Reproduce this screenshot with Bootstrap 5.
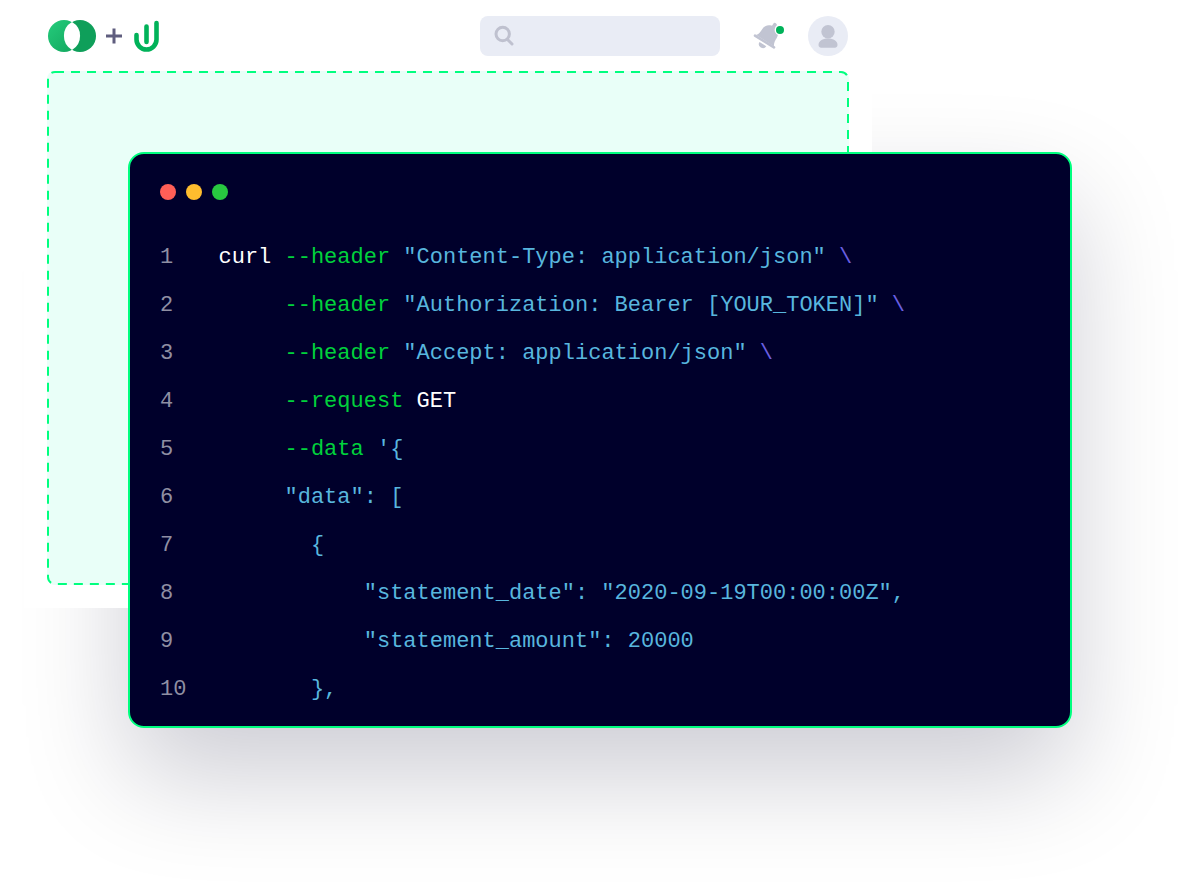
<!DOCTYPE html>
<html lang="en">
<head>
<meta charset="utf-8">
<title>API request</title>
<link href="https://cdn.jsdelivr.net/npm/bootstrap@5.3.0/dist/css/bootstrap.min.css" rel="stylesheet">
<style>
body { background: #fff; }
.stage { height: 888px; overflow: hidden; }
.glow { position: absolute; left: 128px; top: 152px; width: 944px; height: 576px; border-radius: 16px; box-shadow: 0 48px 110px rgba(0, 0, 40, .2); }
.sheet { position: relative; z-index: 1; margin-left: 24px; width: 848px; height: 608px; padding: 16px 23px 0 23px; background: #fff; }
.topbar { height: 40px; margin-bottom: 15px; }
.findbox { width: 240px; height: 40px; background: #e9ecf5; border-radius: 8px; padding-left: 12px; margin-left: 320px; }
.bellbox { margin-left: 30px; width: 32px; height: 32px; }
.bellbox svg { overflow: visible; }
.face { margin-left: 26px; width: 40px; height: 40px; background: #e9ecf5; }
.dropzone { height: 514px; background: #e9fff8; border-radius: 8px; }
.dropline { fill: none; stroke: #00ff7f; stroke-width: 2; stroke-dasharray: 9 7; }
.terminal { position: absolute; z-index: 2; left: 128px; top: 152px; width: 944px; height: 576px; background: #00002b; border: 2px solid #00ff7f; border-radius: 16px; padding: 30px; font-family: "Liberation Mono", monospace; font-size: 22px; line-height: 48px; }
.lights { height: 16px; gap: 10px; margin-bottom: 34px; }
.light { width: 16px; height: 16px; }
.red { background: #ff5f57; }
.amber { background: #ffbd2e; }
.lime { background: #28c840; }
.lineno { width: 58.5px; flex: none; color: #8f8fa3; }
.codeline { white-space: pre; color: #fff; }
.flag { color: #00d13c; }
.str { color: #58b6de; }
.esc { color: #6a5fe0; }
</style>
</head>
<body class="m-0">
<div class="stage position-relative">
  <div class="glow"></div>
  <div class="sheet">
    <div class="topbar d-flex align-items-center">
      <svg width="113" height="40" viewBox="0 0 113 40" fill="none" class="flex-shrink-0" aria-label="logo">
        <defs>
          <linearGradient id="lg1" x1="0" y1="0" x2="1" y2="1"><stop offset="0" stop-color="#25cc7c"/><stop offset="1" stop-color="#10a45c"/></linearGradient>
        </defs>
        <circle cx="33" cy="20" r="16" fill="#0f9f5a"/>
        <circle cx="17" cy="20" r="16" fill="url(#lg1)"/>
        <path d="M25 6.1 A16 16 0 0 1 25 33.9 A16 16 0 0 1 25 6.1Z" fill="#fff"/>
        <path d="M59 20H75M67 12.5V27.5" stroke="#5f5d7e" stroke-width="3"/>
        <path d="M89.5 19v4.5a10 10 0 0 0 20 0V7M99.5 10.5V26" stroke="#00b259" stroke-width="4.6" stroke-linecap="round"/>
      </svg>
      <div class="findbox d-flex align-items-center">
        <svg width="24" height="24" viewBox="0 0 24 24" fill="none" aria-label="search">
          <circle cx="10.7" cy="10" r="6.7" stroke="#bfc1cf" stroke-width="3"/>
          <path d="M15.5 15.5L20 20" stroke="#bfc1cf" stroke-width="3" stroke-linecap="round"/>
        </svg>
      </div>
      <div class="bellbox">
        <svg width="32" height="32" viewBox="0 0 32 32" class="d-block" aria-label="notifications">
          <g transform="translate(14.5 21.5) rotate(32)" fill="#c1c4d2">
            <path d="M-10.5 -1C-8.5 -4 -8.5 -6.5 -8.5 -9.5C-8.5 -14.5 -4.5 -17.5 0 -17.5C4.5 -17.5 8.5 -14.5 8.5 -9.5C8.5 -6.5 8.5 -4 10.5 -1Z"/>
            <rect x="-2" y="-21.5" width="4" height="7" rx="2"/>
            <rect x="-12.5" y="-1.3" width="25" height="2.6" rx="1.3"/>
            <path d="M-4 3H4A4 4 0 0 1 -4 3Z"/>
          </g>
          <circle cx="30" cy="10" r="5.4" fill="#fff"/>
          <circle cx="30" cy="10" r="4" fill="#00b259"/>
        </svg>
      </div>
      <div class="face rounded-circle flex-shrink-0">
        <svg width="40" height="40" viewBox="0 0 40 40" class="d-block" fill="#c1c4d2" aria-label="user">
          <circle cx="20" cy="15.7" r="6.7"/>
          <path d="M10.5 29C10.5 25 14.5 22.5 20 22.5S29.5 25 29.5 29C29.5 31 28 31.7 27 31.7H13C12 31.7 10.5 31 10.5 29Z"/>
        </svg>
      </div>
    </div>
    <div class="dropzone">
      <svg width="802" height="514" viewBox="0 0 802 514" class="d-block"><rect class="dropline" x="1" y="1" width="800" height="512" rx="7"/></svg>
    </div>
  </div>
  <div class="terminal">
    <div class="lights d-flex">
      <span class="light red rounded-circle"></span>
      <span class="light amber rounded-circle"></span>
      <span class="light lime rounded-circle"></span>
    </div>
    <div class="d-flex"><span class="lineno">1</span><span class="codeline">curl <span class="flag">--header</span> <span class="str">"Content-Type: application/json"</span> <span class="esc">\</span></span></div>
    <div class="d-flex"><span class="lineno">2</span><span class="codeline">     <span class="flag">--header</span> <span class="str">"Authorization: Bearer [YOUR_TOKEN]"</span> <span class="esc">\</span></span></div>
    <div class="d-flex"><span class="lineno">3</span><span class="codeline">     <span class="flag">--header</span> <span class="str">"Accept: application/json"</span> <span class="esc">\</span></span></div>
    <div class="d-flex"><span class="lineno">4</span><span class="codeline">     <span class="flag">--request</span> GET</span></div>
    <div class="d-flex"><span class="lineno">5</span><span class="codeline">     <span class="flag">--data</span> <span class="str">'{</span></span></div>
    <div class="d-flex"><span class="lineno">6</span><span class="codeline">     <span class="str">"data": [</span></span></div>
    <div class="d-flex"><span class="lineno">7</span><span class="codeline">       <span class="str">{</span></span></div>
    <div class="d-flex"><span class="lineno">8</span><span class="codeline">           <span class="str">"statement_date": "2020-09-19T00:00:00Z",</span></span></div>
    <div class="d-flex"><span class="lineno">9</span><span class="codeline">           <span class="str">"statement_amount": 20000</span></span></div>
    <div class="d-flex"><span class="lineno">10</span><span class="codeline">       <span class="str">},</span></span></div>
  </div>
</div>
<script src="https://cdn.jsdelivr.net/npm/bootstrap@5.3.0/dist/js/bootstrap.bundle.min.js"></script>
</body>
</html>
